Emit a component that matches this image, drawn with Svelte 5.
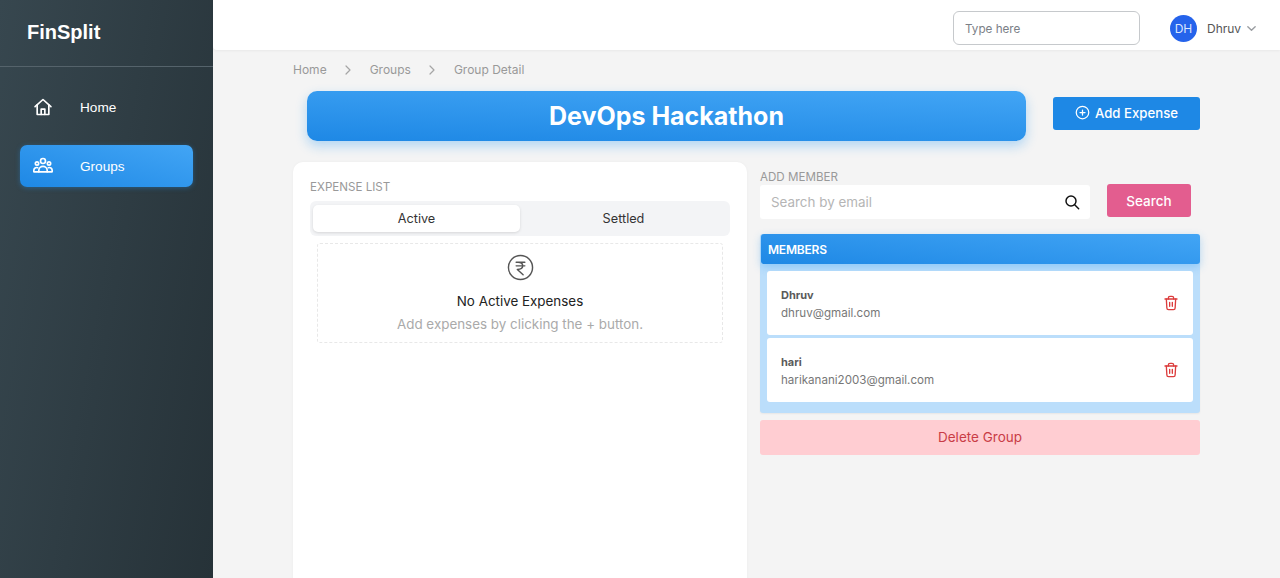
<script lang="ts">
  type Member = { name: string; email: string };

  const crumbs = ["Home", "Groups", "Group Detail"];
  const members: Member[] = [
    { name: "Dhruv", email: "dhruv@gmail.com" },
    { name: "hari", email: "harikanani2003@gmail.com" },
  ];
</script>

<div class="layout">
  <aside class="sidebar">
    <div class="brand">FinSplit</div>
    <nav>
      <div class="nav-item">
        <svg class="nav-icon" viewBox="0 0 24 24" fill="none" stroke="currentColor" stroke-width="2" stroke-linecap="round" stroke-linejoin="round">
          <path d="M2.5 11.5 12 3l9.5 8.5" />
          <path d="M5 9.5v11.5h14V9.5" />
          <path d="M9.8 21v-6.5h4.4V21" />
        </svg>
        <span>Home</span>
      </div>
      <div class="nav-item active">
        <svg class="nav-icon" viewBox="0 0 24 24" fill="none" stroke="currentColor" stroke-width="2" stroke-linecap="round" stroke-linejoin="round">
          <circle cx="12" cy="6" r="3" />
          <circle cx="4.8" cy="9" r="2" />
          <circle cx="19.2" cy="9" r="2" />
          <path d="M7 19v-2a5 4.5 0 0 1 10 0v2z" />
          <path d="M7 19H1v-2a3.4 3.2 0 0 1 4.6-3" />
          <path d="M17 19h6v-2a3.4 3.2 0 0 0-4.6-3" />
        </svg>
        <span>Groups</span>
      </div>
    </nav>
  </aside>

  <div class="main">
    <header class="topbar">
      <input class="top-search" placeholder="Type here" />
      <div class="user">
        <div class="avatar">DH</div>
        <span class="user-name">Dhruv</span>
        <svg class="chevron" viewBox="0 0 12 12" fill="none" stroke="currentColor" stroke-width="1.5" stroke-linecap="round" stroke-linejoin="round">
          <path d="M2 4l4 4 4-4" />
        </svg>
      </div>
    </header>

    <div class="content">
      <div class="breadcrumbs">
        {#each crumbs as crumb, i}
          {#if i > 0}
            <svg class="sep" viewBox="0 0 8 10" fill="none" stroke="currentColor" stroke-width="1.2" stroke-linecap="round" stroke-linejoin="round">
              <path d="M2 1l4 4-4 4" />
            </svg>
          {/if}
          <span>{crumb}</span>
        {/each}
      </div>

      <div class="title-row">
        <h1 class="banner">DevOps Hackathon</h1>
        <button class="add-expense">
          <svg viewBox="0 0 24 24" fill="none" stroke="currentColor" stroke-width="2" stroke-linecap="round">
            <circle cx="12" cy="12" r="10" />
            <path d="M12 8v8M8 12h8" />
          </svg>
          Add Expense
        </button>
      </div>

      <div class="columns">
        <section class="expense-card">
          <div class="label">EXPENSE LIST</div>
          <div class="tabs">
            <div class="tab selected">Active</div>
            <div class="tab">Settled</div>
          </div>
          <div class="empty">
            <svg class="rupee" viewBox="0 0 28 28" fill="none" stroke="#555" stroke-width="1.5" stroke-linecap="round" stroke-linejoin="round">
              <circle cx="14" cy="14" r="12.5" />
              <path d="M9.5 8.5h9M9.5 12.3h9M11.5 8.5c3.4 0 4.8 1.6 4.8 3.8s-1.8 3.8-5.6 3.8l6 5.4" />
            </svg>
            <div class="empty-title">No Active Expenses</div>
            <div class="empty-text">Add expenses by clicking the + button.</div>
          </div>
        </section>

        <section class="side">
          <div class="label">ADD MEMBER</div>
          <div class="search-row">
            <div class="email-box">
              <input placeholder="Search by email" />
              <svg viewBox="0 0 24 24" fill="none" stroke="#111" stroke-width="2.2" stroke-linecap="round">
                <circle cx="10.5" cy="10.5" r="7.5" />
                <path d="M16 16l6 6" />
              </svg>
            </div>
            <button class="search-btn">Search</button>
          </div>

          <div class="members">
            <div class="members-head">MEMBERS</div>
            <div class="members-list">
              {#each members as member (member.email)}
                <div class="member">
                  <div>
                    <div class="member-name">{member.name}</div>
                    <div class="member-email">{member.email}</div>
                  </div>
                  <svg class="trash" viewBox="0 0 24 24" fill="none" stroke="currentColor" stroke-width="2" stroke-linecap="round" stroke-linejoin="round">
                    <path d="M3 6h18" />
                    <path d="M8 6V4.5A2.5 2.5 0 0 1 10.5 2h3A2.5 2.5 0 0 1 16 4.5V6" />
                    <path d="M5 6l.8 13.5A2.5 2.5 0 0 0 8.3 22h7.4a2.5 2.5 0 0 0 2.5-2.5L19 6" />
                    <path d="M10 11v6M14 11v6" />
                  </svg>
                </div>
              {/each}
            </div>
          </div>

          <button class="delete-btn">Delete Group</button>
        </section>
      </div>
    </div>
  </div>
</div>

<style>
  :global(body) {
    margin: 0;
    overflow: hidden;
    background: #f4f4f4;
    font-family: Inter, "Liberation Sans", sans-serif;
  }

  .layout {
    display: flex;
    height: 578px;
    overflow: hidden;
  }

  .sidebar {
    width: 213px;
    flex: none;
    background: linear-gradient(100deg, #37474f, #263238);
    color: #fff;
    font-family: "Liberation Sans", Arial, sans-serif;
  }

  .brand {
    height: 67px;
    box-sizing: border-box;
    padding: 20px 0 0 27px;
    font-size: 20px;
    line-height: 24px;
    font-weight: 700;
    border-bottom: 1px solid #55636b;
  }

  nav {
    padding: 19px 20px 0;
    display: flex;
    flex-direction: column;
    gap: 17px;
  }

  .nav-item {
    height: 42px;
    border-radius: 7px;
    display: flex;
    align-items: center;
    font-size: 13.6px;
  }

  .nav-item span {
    margin-left: 23px;
  }

  .nav-item.active {
    background: linear-gradient(195deg, #42a5f5, #1e88e5);
    box-shadow: 0 1px 5px rgba(33, 150, 243, 0.35);
  }

  .nav-icon {
    width: 20px;
    height: 20px;
    margin-left: 13px;
    margin-right: 4px;
  }

  .main {
    flex: 1;
    min-width: 0;
  }

  .topbar {
    height: 50px;
    background: #fff;
    border-bottom-left-radius: 4px;
    box-shadow: 0 1px 3px rgba(0, 0, 0, 0.05);
    display: flex;
    align-items: center;
    justify-content: flex-end;
    padding-right: 23px;
    position: relative;
  }

  .top-search {
    width: 187px;
    height: 34px;
    box-sizing: border-box;
    margin-top: 6px;
    padding: 1px 11px 0;
    border: 1px solid #c6c9cc;
    border-radius: 6px;
    font: 11.7px Inter, sans-serif;
    outline: none;
  }

  .top-search::placeholder {
    color: #7b8087;
    opacity: 1;
  }

  .user {
    display: flex;
    align-items: center;
    margin-left: 30px;
    margin-top: 6px;
    color: #555;
    font-size: 12px;
  }

  .avatar {
    width: 27px;
    height: 27px;
    border-radius: 50%;
    background: #2563eb;
    color: #dbe6fd;
    display: flex;
    align-items: center;
    justify-content: center;
    font-size: 12px;
  }

  .user-name {
    width: 35px;
    margin-left: 10px;
  }

  .chevron {
    width: 11px;
    height: 11px;
    margin-left: 4px;
    color: #9a9da1;
  }

  .content {
    padding: 11px 80px 0;
  }

  .breadcrumbs {
    display: flex;
    align-items: center;
    height: 17px;
    color: #999;
    font-size: 12px;
  }

  .sep {
    width: 8px;
    height: 10px;
    margin: 0 18px 0 17px;
    color: #a5a5a5;
  }

  .title-row {
    display: flex;
    align-items: flex-start;
    margin-top: 13px;
    padding-left: 14px;
  }

  .banner {
    width: 719px;
    height: 50px;
    margin: 0;
    border-radius: 10px;
    background: linear-gradient(182deg, #42a5f5, #1e88e5);
    box-shadow: 0 5px 12px rgba(33, 150, 243, 0.32);
    color: #fff;
    font-size: 25px;
    font-weight: 700;
    line-height: 50px;
    text-align: center;
  }

  .add-expense {
    margin: 6px 0 0 27px;
    width: 147px;
    height: 33px;
    border: 0;
    border-radius: 3px;
    background: #1e88e5;
    color: #fff;
    font: 500 13.2px Inter, sans-serif;
    display: flex;
    align-items: center;
    justify-content: center;
    gap: 5px;
    padding: 0 0 2px;
  }

  .add-expense svg {
    width: 15px;
    height: 15px;
  }

  .columns {
    display: flex;
    gap: 13px;
    margin-top: 21px;
  }

  .expense-card {
    width: 454px;
    height: 430px;
    box-sizing: border-box;
    flex: none;
    background: #fff;
    border-radius: 10px;
    box-shadow: 0 0 3px rgba(0, 0, 0, 0.04);
    padding: 18px 17px 0;
  }

  .label {
    color: #999;
    font-size: 11.6px;
    line-height: 15px;
  }

  .tabs {
    display: flex;
    margin-top: 6px;
    width: 420px;
    height: 35px;
    box-sizing: border-box;
    padding: 4px 3px;
    background: #f3f4f6;
    border-radius: 6px;
  }

  .tab {
    flex: 1;
    display: flex;
    align-items: center;
    justify-content: center;
    border-radius: 5px;
    font-size: 12.7px;
    color: #333;
  }

  .tab.selected {
    background: #fff;
    box-shadow: 0 1px 3px rgba(0, 0, 0, 0.12);
  }

  .empty {
    width: 406px;
    height: 100px;
    box-sizing: border-box;
    margin: 7px 0 0 7px;
    border: 1px dashed #e8e8e8;
    border-radius: 3px;
    display: flex;
    flex-direction: column;
    align-items: center;
    padding-top: 10px;
  }

  .rupee {
    width: 27px;
    height: 27px;
  }

  .empty-title {
    margin-top: 12px;
    font-size: 13.4px;
    line-height: 17px;
    color: #222;
  }

  .empty-text {
    margin-top: 6px;
    font-size: 13.4px;
    line-height: 16px;
    color: #aaa;
  }

  .side {
    width: 440px;
    flex: none;
  }

  .side > .label {
    margin-top: 8px;
  }

  .search-row {
    display: flex;
    align-items: flex-start;
    margin-top: -1px;
  }

  .email-box {
    width: 330px;
    height: 34px;
    margin-top: 1px;
    box-sizing: border-box;
    background: #fff;
    border-radius: 3px;
    display: flex;
    align-items: center;
    padding: 0 11px;
  }

  .email-box input {
    flex: 1;
    min-width: 0;
    height: 32px;
    border: 0;
    outline: none;
    padding: 0;
    background: transparent;
    font: 13.4px Inter, sans-serif;
  }

  .email-box input::placeholder {
    color: #b5b5b5;
    opacity: 1;
  }

  .email-box svg {
    width: 16px;
    height: 16px;
    margin-right: -1px;
  }

  .search-btn {
    margin-left: 17px;
    width: 84px;
    height: 33px;
    border: 0;
    padding: 0;
    border-radius: 3px;
    background: #e35d8f;
    color: #fff;
    font: 500 13.5px Inter, sans-serif;
  }

  .members {
    margin: 15px 0 0;
    border-radius: 3px;
    background: #bbdefb;
    box-shadow: 0 1px 2px rgba(0, 0, 0, 0.06);
    padding-bottom: 11px;
  }

  .members-head {
    height: 30px;
    padding-left: 7px;
    margin-left: 1px;
    border-radius: 3px;
    background: linear-gradient(186deg, #42a5f5, #1e88e5);
    box-shadow: 0 3px 8px rgba(33, 150, 243, 0.3);
    color: #fff;
    font-size: 12px;
    font-weight: 600;
    letter-spacing: -0.2px;
    line-height: 31px;
  }

  .members-list {
    display: flex;
    flex-direction: column;
    gap: 3px;
    padding: 7px 7px 0;
  }

  .member {
    height: 64px;
    box-sizing: border-box;
    background: #fff;
    border-radius: 3px;
    display: flex;
    align-items: center;
    justify-content: space-between;
    padding: 0 14px 0 14px;
  }

  .member-name {
    color: #5a5a5a;
    font-size: 11px;
    font-weight: 700;
    line-height: 14px;
    margin-top: 2px;
  }

  .member-email {
    color: #777;
    font-size: 11.6px;
    line-height: 15px;
    margin-top: 4px;
  }

  .trash {
    width: 16px;
    height: 16px;
    color: #dc3c3c;
  }

  .delete-btn {
    display: block;
    width: 440px;
    height: 35px;
    margin-top: 7px;
    border: 0;
    padding: 0 0 2px;
    border-radius: 3px;
    background: #ffcdd2;
    color: #c93c46;
    font: 13.5px Inter, sans-serif;
  }
</style>
